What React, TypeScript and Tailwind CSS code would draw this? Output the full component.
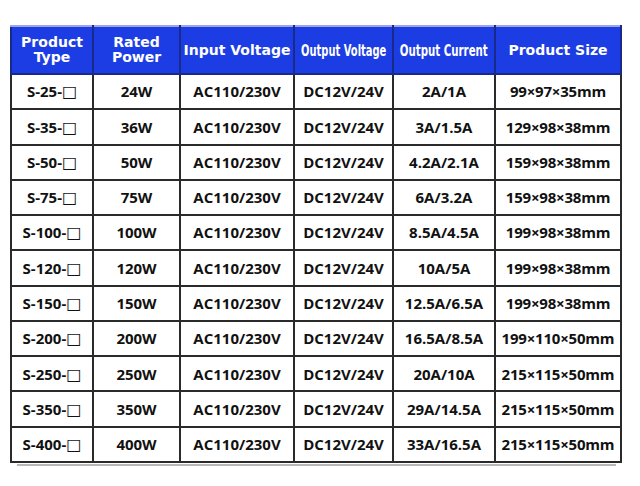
const rows = [
  ['S-25-', '24W', '2A/1A', '99×97×35mm'],
  ['S-35-', '36W', '3A/1.5A', '129×98×38mm'],
  ['S-50-', '50W', '4.2A/2.1A', '159×98×38mm'],
  ['S-75-', '75W', '6A/3.2A', '159×98×38mm'],
  ['S-100-', '100W', '8.5A/4.5A', '199×98×38mm'],
  ['S-120-', '120W', '10A/5A', '199×98×38mm'],
  ['S-150-', '150W', '12.5A/6.5A', '199×98×38mm'],
  ['S-200-', '200W', '16.5A/8.5A', '199×110×50mm'],
  ['S-250-', '250W', '20A/10A', '215×115×50mm'],
  ['S-350-', '350W', '29A/14.5A', '215×115×50mm'],
  ['S-400-', '400W', '33A/16.5A', '215×115×50mm'],
];

const wide = "font-['DejaVu_Sans',sans-serif] text-[14px]";
const th = 'border-2 border-[#1a2a8a] border-t-[#9aa6e8] whitespace-nowrap';

export default function App() {
  return (
    <div className="min-h-[486px] w-[640px] bg-white pt-[25px] pl-[10px]">
      <table className="w-[610px] table-fixed border-collapse border-2 border-[#2a2a2a] font-['Open_Sans',sans-serif] font-bold text-[#111]">
        <colgroup>
          <col className="w-[82px]" />
          <col className="w-[87px]" />
          <col className="w-[114px]" />
          <col className="w-[99px]" />
          <col className="w-[102px]" />
          <col className="w-[126px]" />
        </colgroup>
        <thead>
          <tr className="h-[48px] bg-[#1d3de4] text-white leading-[15px]">
            <th className={`${th} ${wide}`}>Product<br />Type</th>
            <th className={`${th} ${wide}`}>Rated<br />Power</th>
            <th className={`${th} ${wide}`}>Input Voltage</th>
            <th className={`${th} ${wide} overflow-hidden`}>
              <div className="flex justify-center">
                <span className="shrink-0 text-[16px] scale-x-[0.62]">Output Voltage</span>
              </div>
            </th>
            <th className={`${th} ${wide} overflow-hidden`}>
              <div className="flex justify-center">
                <span className="shrink-0 text-[16px] scale-x-[0.64]">Output Current</span>
              </div>
            </th>
            <th className={`${th} ${wide}`}>Product Size</th>
          </tr>
        </thead>
        <tbody className="text-[15px]">
          {rows.map((r) => (
            <tr key={r[0]} className="h-[35.27px] text-center">
              <td className="border-2 border-[#2a2a2a]">
                {r[0]}
                <span className="font-['DejaVu_Sans',sans-serif] text-[16px] leading-none">□</span>
              </td>
              <td className="border-2 border-[#2a2a2a]">{r[1]}</td>
              <td className="border-2 border-[#2a2a2a]">AC110/230V</td>
              <td className="border-2 border-[#2a2a2a]">DC12V/24V</td>
              <td className="border-2 border-[#2a2a2a]">{r[2]}</td>
              <td className="border-2 border-[#2a2a2a] tracking-[-0.2px]">{r[3]}</td>
            </tr>
          ))}
        </tbody>
      </table>
      <div className="ml-[7px] mt-[1px] h-[2px] w-[599px] bg-[#b8b8b8]" />
    </div>
  );
}
